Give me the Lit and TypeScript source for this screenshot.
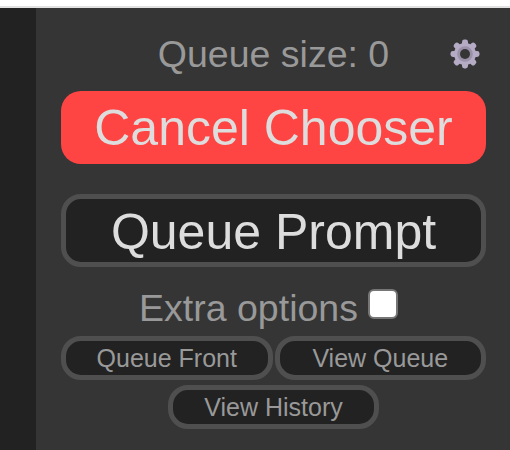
import { LitElement, html, svg, css } from "lit";
import { customElement } from "lit/decorators.js";

@customElement("app-root")
export class AppRoot extends LitElement {
  static styles = css`
    :host { display: block; width: 510px; height: 450px; overflow: hidden; background: #fff; font-family: "Liberation Sans", Arial, sans-serif; }
    .top { height: 6px; background: #fff; border-bottom: 2px solid #e2e2e2; }
    .main { display: flex; height: 442px; }
    .side { flex: none; width: 36px; background: #222; }
    .panel { flex: 1; min-width: 0; background: #353535; padding: 0 24px 0 25px; display: flex; flex-direction: column; align-items: stretch; }
    .head { height: 83px; display: flex; align-items: center; justify-content: center; position: relative; padding-top: 10px; box-sizing: border-box; }
    .size { font-size: 37.5px; color: #999; line-height: 43px; }
    .gear { position: absolute; left: 389px; top: 31px; width: 30px; height: 30px; }
    button { font-family: inherit; box-sizing: border-box; cursor: pointer; padding: 0; }
    .big { width: 100%; height: 73px; font-size: 50px; color: #ddd; border-radius: 20px; }
    .cancel { background: #ff4444; border: none; }
    .queue { background: #222; border: 5px solid #4f4f4f; margin-top: 30px; padding-top: 2px; }
    .extra { display: flex; justify-content: center; align-items: center; gap: 10px; height: 69px; font-size: 37.5px; color: #999; padding: 14px 10px 0 0; box-sizing: border-box; }
    .check { appearance: none; margin: 0 0 10px; width: 30px; height: 30px; box-sizing: border-box; background: #fff; border: 2px solid #767676; border-radius: 6px; }
    .row { display: flex; justify-content: center; gap: 2px; }
    .row + .row { margin-top: 5px; }
    .small { flex: none; width: 211.5px; height: 44px; background: #222; border: 5px solid #4f4f4f; border-radius: 20px; color: #999; font-size: 25px; }
  `;
  render() {
    return html`
      <div class="top"></div>
      <div class="main">
        <div class="side"></div>
        <div class="panel">
          <div class="head">
            <span class="size">Queue size: 0</span>
            <svg class="gear" viewBox="0 0 30 30">
              <g fill="#b5abc4">
                ${[0, 45, 90, 135].map(
                  (a) => svg`<rect x="12" y="0.5" width="6" height="29" rx="2.4" transform="rotate(${a} 15 15)"></rect>`
                )}
                <circle cx="15" cy="15" r="11"></circle>
              </g>
              <circle cx="15" cy="15" r="7.8" fill="#9a90aa"></circle>
              <circle cx="15" cy="15" r="5" fill="#353535"></circle>
            </svg>
          </div>
          <button class="big cancel">Cancel Chooser</button>
          <button class="big queue">Queue Prompt</button>
          <label class="extra">Extra options <input class="check" type="checkbox" /></label>
          <div class="row">
            <button class="small">Queue Front</button>
            <button class="small">View Queue</button>
          </div>
          <div class="row">
            <button class="small">View History</button>
          </div>
        </div>
      </div>
    `;
  }
}
